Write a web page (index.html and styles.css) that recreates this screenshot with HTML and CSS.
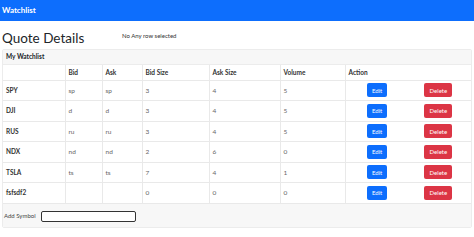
FILE: index.html
```html
<!DOCTYPE html>
<html lang="en">
<head>
<meta charset="UTF-8" />
<title>Watchlist</title>
<link rel="stylesheet" href="styles.css">
</head>
<body>
  <nav class="navbar">Watchlist</nav>
  <div class="container">
    <div class="top-row">
      <h2>Quote Details</h2>
      <p class="selected">No Any row selected</p>
    </div>
    <div class="card">
      <div class="card-header">My Watchlist</div>
      <table class="table">
        <colgroup>
          <col style="width:62px"><col style="width:37px"><col style="width:40px"><col style="width:67px">
          <col style="width:71px"><col style="width:65px"><col>
        </colgroup>
        <thead>
          <tr><th></th><th>Bid</th><th>Ask</th><th>Bid Size</th><th>Ask Size</th><th>Volume</th><th>Action</th></tr>
        </thead>
        <tbody>
          <tr><th>SPY</th><td>sp</td><td>sp</td><td>3</td><td>4</td><td>5</td>
            <td><div class="actions"><button class="btn btn-edit">Edit</button><button class="btn btn-delete">Delete</button></div></td></tr>
          <tr><th>DJI</th><td>d</td><td>d</td><td>3</td><td>4</td><td>5</td>
            <td><div class="actions"><button class="btn btn-edit">Edit</button><button class="btn btn-delete">Delete</button></div></td></tr>
          <tr><th>RUS</th><td>ru</td><td>ru</td><td>3</td><td>4</td><td>5</td>
            <td><div class="actions"><button class="btn btn-edit">Edit</button><button class="btn btn-delete">Delete</button></div></td></tr>
          <tr><th>NDX</th><td>nd</td><td>nd</td><td>2</td><td>6</td><td>0</td>
            <td><div class="actions"><button class="btn btn-edit">Edit</button><button class="btn btn-delete">Delete</button></div></td></tr>
          <tr><th>TSLA</th><td>ts</td><td>ts</td><td>7</td><td>4</td><td>1</td>
            <td><div class="actions"><button class="btn btn-edit">Edit</button><button class="btn btn-delete">Delete</button></div></td></tr>
          <tr><th>fsfsdf2</th><td></td><td></td><td>0</td><td>0</td><td>0</td>
            <td><div class="actions"><button class="btn btn-edit">Edit</button><button class="btn btn-delete">Delete</button></div></td></tr>
        </tbody>
      </table>
      <div class="card-footer">
        <label for="symbol">Add Symbol</label>
        <input id="symbol" type="text">
      </div>
    </div>
  </div>
</body>
</html>
```

FILE: styles.css
```css
* {
  box-sizing: border-box;
}
body {
  margin: 0;
  font-family: Lato, "Noto Sans", sans-serif;
  color: #212529;
  background: #fff;
}

.navbar {
  height: 21px;
  background: #0d6efd;
  color: #fff;
  font-weight: 700;
  font-size: 8px;
  line-height: 21px;
  padding-left: 2px;
}

.container {
  padding: 0 2px;
}

.top-row {
  display: flex;
  height: 28px;
}
.top-row h2 {
  margin: 0;
  width: 120px;
  font-weight: 400;
  font-size: 13.5px;
  line-height: 1;
  padding-top: 11px;
}
.selected {
  margin: 0;
  font-size: 6px;
  padding-top: 11px;
  color: #333;
}

.card {
  border: 1px solid #ececec;
  border-radius: 2px;
  overflow: hidden;
}
.card-header {
  height: 15px;
  background: #f7f7f7;
  border-bottom: 1px solid #ececec;
  font-weight: 700;
  font-size: 6.5px;
  line-height: 14px;
  padding-left: 3px;
}

.table {
  width: 100%;
  border-collapse: collapse;
  table-layout: fixed;
  font-size: 6.5px;
}
.table th,
.table td {
  text-align: left;
  padding: 0 3px;
  border-bottom: 1px solid #e9e9e9;
  border-left: 1px solid #e9e9e9;
  vertical-align: middle;
}
.table th:first-child {
  border-left: none;
}
.table thead th {
  height: 15px;
  font-weight: 700;
  color: #333;
}
.table tbody tr {
  height: 20.5px;
}
.table tbody td {
  color: #666;
}
.table tbody th {
  font-weight: 700;
  color: #333;
}

.actions {
  display: flex;
  justify-content: space-around;
  margin: 0 -3px;
  padding-left: 3px;
}
.btn {
  border: none;
  border-radius: 2px;
  color: #fff;
  font-family: inherit;
  font-size: 6px;
  height: 14px;
  padding: 0;
  cursor: pointer;
}
.btn-edit {
  width: 20px;
  background: #0d6efd;
}
.btn-delete {
  width: 28px;
  background: #dc3545;
}

.card-footer {
  height: 23px;
  background: #f7f7f7;
  display: flex;
  align-items: center;
  padding-left: 1px;
  font-size: 6px;
  color: #444;
}
.card-footer input {
  margin-left: 5px;
  width: 95px;
  height: 11px;
  border: 1px solid #333;
  border-radius: 2px;
  background: #fff;
  margin-top: 3px;
}
```
